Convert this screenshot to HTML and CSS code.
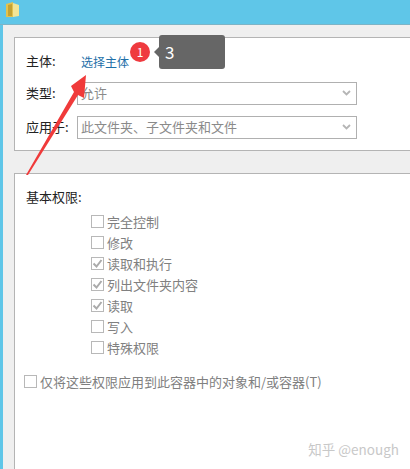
FILE: index.html
```html
<!DOCTYPE html>
<html lang="en">
<head>
  <meta charset="UTF-8">
  <title>权限项目</title>
  <link rel="stylesheet" href="styles.css">
</head>
<body>

  <div class="titlebar">
    <svg class="folder" width="13" height="15" viewBox="0 0 13 15">
      <path d="M0 2 L7 0 L7 15 L0 15 Z" fill="#e3c24e"/>
      <path d="M7 1 L13 3 L13 14 L7 15 Z" fill="#f4e596"/>
      <path d="M2 3 L6 2 L6 14 L2 14 Z" fill="#c4a233"/>
    </svg>
  </div>

  <div class="window">
    <div class="panel top-panel">
      <div class="row owner-row">
        <span class="row-label">主体:</span>
        <a class="owner-link">选择主体</a>
      </div>
      <div class="row">
        <span class="row-label">类型:</span>
        <div class="combo">
          <span>允许</span>
          <svg class="chevron" width="9" height="6" viewBox="0 0 9 6"><path d="M1 1 L4.5 4.5 L8 1" fill="none" stroke="#b5b5b5" stroke-width="1.8"/></svg>
        </div>
      </div>
      <div class="row">
        <span class="row-label">应用于:</span>
        <div class="combo">
          <span>此文件夹、子文件夹和文件</span>
          <svg class="chevron" width="9" height="6" viewBox="0 0 9 6"><path d="M1 1 L4.5 4.5 L8 1" fill="none" stroke="#b5b5b5" stroke-width="1.8"/></svg>
        </div>
      </div>
    </div>

    <div class="panel perm-panel">
      <div class="perm-title">基本权限:</div>
      <ul class="perm-list">
        <li><span class="check"></span>完全控制</li>
        <li><span class="check"></span>修改</li>
        <li><span class="check"><svg width="11" height="11" viewBox="0 0 11 11"><path d="M1.5 5.5 L4.5 8.5 L9.5 2" fill="none" stroke="#ababab" stroke-width="2"/></svg></span>读取和执行</li>
        <li><span class="check"><svg width="11" height="11" viewBox="0 0 11 11"><path d="M1.5 5.5 L4.5 8.5 L9.5 2" fill="none" stroke="#ababab" stroke-width="2"/></svg></span>列出文件夹内容</li>
        <li><span class="check"><svg width="11" height="11" viewBox="0 0 11 11"><path d="M1.5 5.5 L4.5 8.5 L9.5 2" fill="none" stroke="#ababab" stroke-width="2"/></svg></span>读取</li>
        <li><span class="check"></span>写入</li>
        <li><span class="check"></span>特殊权限</li>
      </ul>
      <div class="apply-row"><span class="check"></span>仅将这些权限应用到此容器中的对象和/或容器(T)</div>
    </div>
  </div>

  <!-- annotations on top of the screenshot -->
  <svg class="arrow" width="100" height="120" viewBox="0 60 100 120">
    <path d="M26 175 L74 92 L71 86 L86 75 L84 98 L78 95 L28 175 Z" fill="#f03a3a"/>
  </svg>
  <div class="badge">1</div>
  <div class="tip">3</div>
  <div class="watermark">知乎 @enough</div>

</body>
</html>
```

FILE: styles.css
```css
body {
  margin: 0;
  height: 469px;
  overflow: hidden;
  position: relative;
  font-family: "Noto Sans CJK SC", "Liberation Sans", sans-serif;
  font-size: 13px;
  background: #efefef;
}
.titlebar {
  height: 25px;
  background: #5fc6e8;
  border-bottom: 1px solid #7db4c6;
  box-sizing: border-box;
  padding: 2px 0 0 6px;
}
.folder {
  display: block;
}
.window {
  height: 444px;
  box-sizing: border-box;
  border-left: 3px solid #5fc6e8;
  padding: 12px 0 0 11px;
}
.panel {
  background: white;
  border: 1px solid #b4b4b4;
  border-right: none;
}
.top-panel {
  height: 114px;
  box-sizing: border-box;
  padding-top: 12px;
  padding-left: 11px;
}
.row {
  display: flex;
  align-items: center;
  height: 22px;
  margin-bottom: 12px;
  color: #222;
}
.owner-row {
  margin-bottom: 10px;
}
.row-label {
  width: 51px;
  flex: none;
  white-space: nowrap;
  line-height: 20px;
  padding-bottom: 1px;
}
.owner-link {
  margin-left: 4px;
  font-size: 12px;
  color: #1e6fa8;
}
.combo {
  width: 280px;
  height: 23px;
  box-sizing: border-box;
  border: 1px solid #b0b0b0;
  background: white;
  color: #8a8a8a;
  display: flex;
  align-items: center;
  justify-content: space-between;
  padding: 0 5px 2px 3px;
}
.chevron {
  margin-top: 2px;
}
.perm-panel {
  margin-top: 22px;
  height: 300px;
  box-sizing: border-box;
  padding: 13px 0 0 11px;
}
.perm-title {
  color: #222;
  line-height: 20px;
}
.perm-list {
  list-style: none;
  margin: 4px 0 0 65px;
  padding: 0;
}
.perm-list li {
  display: flex;
  align-items: center;
  height: 21px;
  gap: 3px;
  color: #808080;
}
.check {
  width: 13px;
  height: 13px;
  flex: none;
  box-sizing: border-box;
  border: 1px solid #b8b8b8;
  background: white;
  display: inline-flex;
  align-items: center;
  justify-content: center;
}
.apply-row {
  display: flex;
  align-items: center;
  gap: 3px;
  margin: 13px 0 0 -2px;
  height: 21px;
  color: #808080;
  white-space: nowrap;
}
.arrow {
  position: absolute;
  left: 0;
  top: 60px;
}
.badge {
  position: absolute;
  left: 130px;
  top: 42px;
  width: 20px;
  height: 20px;
  border-radius: 50%;
  background: #ef3a3f;
  color: white;
  font-size: 12px;
  line-height: 20px;
  text-align: center;
}
.tip {
  position: absolute;
  left: 159px;
  top: 35px;
  width: 66px;
  height: 34px;
  border-radius: 3px;
  background: #666666;
  color: white;
  font-size: 17px;
  line-height: 34px;
  padding-left: 6px;
  box-sizing: border-box;
}
.tip::before {
  content: "";
  position: absolute;
  left: -5px;
  top: 12px;
  border-top: 5px solid transparent;
  border-bottom: 5px solid transparent;
  border-right: 5px solid #666666;
}
.watermark {
  position: absolute;
  right: 11px;
  top: 441px;
  font-size: 13.5px;
  line-height: 16px;
  color: #c8c8c8;
  white-space: nowrap;
}
```
